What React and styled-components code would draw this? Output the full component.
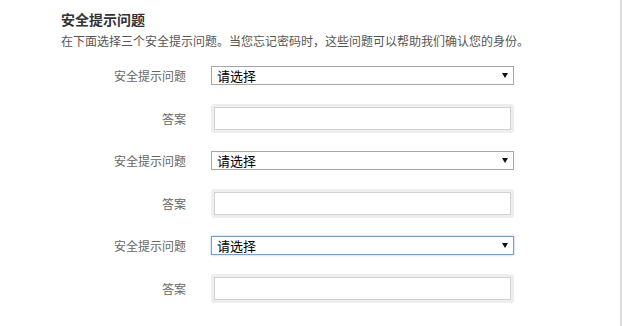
import React from "react";
import styled, { createGlobalStyle } from "styled-components";

const GlobalStyle = createGlobalStyle`
    html, body {
        margin: 0;
        padding: 0;
        background: #fff;
    }
    body {
        font-family: "Noto Sans CJK SC", "Noto Sans", sans-serif;
    }
`;

const Page = styled.div`
    width: 622px;
    height: 326px;
    box-sizing: border-box;
    border-right: 2px solid #dcdcdc;
    padding: 10px 0 0 61px;
`;

const Title = styled.h2`
    margin: 0;
    font-size: 14px;
    line-height: 18px;
    font-weight: bold;
    color: #333;
`;

const Hint = styled.p`
    margin: 4px 0 0;
    font-size: 12px;
    line-height: 17px;
    color: #555;
    white-space: nowrap;
`;

const Form = styled.div`
    margin-top: 17px;
    display: grid;
    grid-template-columns: 125px 303px;
    column-gap: 25px;
    align-items: center;
`;

const Label = styled.div`
    text-align: right;
    font-size: 12px;
    color: #666;
    margin-bottom: ${p => p.$gap}px;
`;

const Select = styled.div`
    height: 19px;
    box-sizing: border-box;
    border: 1px solid ${p => p.$focused ? "#6f9fd8" : "#a6a6a6"};
    box-shadow: ${p => p.$focused ? "0 0 2px rgba(90, 150, 220, 0.6)" : "none"};
    display: flex;
    align-items: center;
    justify-content: space-between;
    padding: 0 5px;
    font-size: 13px;
    color: #000;
    background: #fff;
    margin-bottom: 19px;
`;

const Arrow = styled.span`
    width: 0;
    height: 0;
    border-left: 3px solid transparent;
    border-right: 3px solid transparent;
    border-top: 5px solid #111;
`;

const AnswerFrame = styled.div`
    height: 29px;
    box-sizing: border-box;
    padding: 3px;
    background: #eeeeee;
    border-radius: 3px;
    margin-bottom: 18px;
`;

const AnswerInput = styled.input`
    display: block;
    width: 100%;
    height: 100%;
    box-sizing: border-box;
    border: 1px solid #d2d2d2;
    background: #fff;
    outline: none;
    padding: 0 4px;
    font-size: 12px;
`;

const questions = [0, 1, 2];

export default function App() {
    return (
        <>
            <GlobalStyle />
            <Page>
                <Title>安全提示问题</Title>
                <Hint>在下面选择三个安全提示问题。当您忘记密码时，这些问题可以帮助我们确认您的身份。</Hint>
                <Form>
                    {questions.map(i => (
                        <React.Fragment key={i}>
                            <Label $gap={19}>安全提示问题</Label>
                            <Select $focused={i === 2}>
                                <span>请选择</span>
                                <Arrow />
                            </Select>
                            <Label $gap={18}>答案</Label>
                            <AnswerFrame>
                                <AnswerInput type="text" />
                            </AnswerFrame>
                        </React.Fragment>
                    ))}
                </Form>
            </Page>
        </>
    );
}
